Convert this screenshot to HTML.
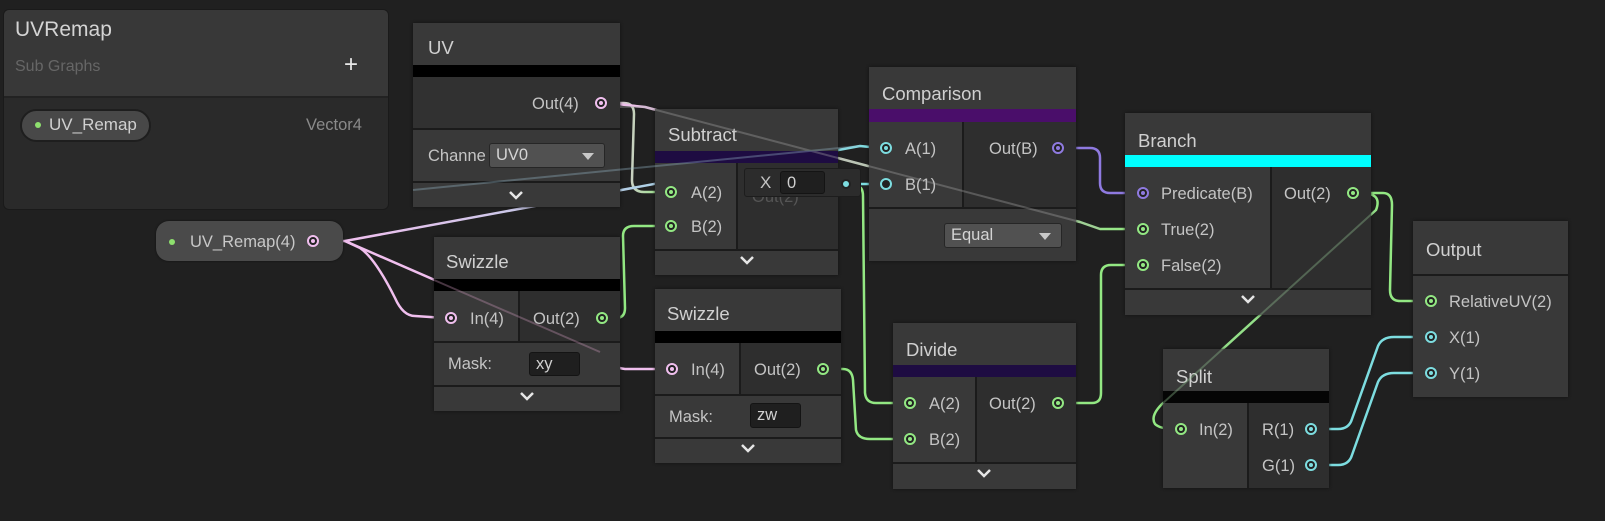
<!DOCTYPE html>
<html><head><meta charset="utf-8"><style>
*{margin:0;padding:0;box-sizing:border-box}
body{width:1605px;height:521px;background:#202020;position:relative;overflow:hidden;font-family:"Liberation Sans",sans-serif;color:#c4c4c4}
.a{position:absolute}
.hd{position:absolute;background:#393939}
.lt{position:absolute;background:#393939}
.dk{position:absolute;background:#2e2e2e}
.t{position:absolute;font-size:18.5px;color:#d0d0d0;white-space:nowrap}
.l{position:absolute;font-size:16.5px;color:#c4c4c4;white-space:nowrap;line-height:18px}
.sh{position:absolute;background:#1b1b1b;box-shadow:0 0 3px #111}
.dd{position:absolute;background:#515151;border:1px solid #262626;border-radius:3px;font-size:16.5px;color:#d4d4d4;padding-left:6px;line-height:23px}
.dd:after{content:"";position:absolute;right:10px;top:9px;border-left:6px solid transparent;border-right:6px solid transparent;border-top:7px solid #c8c8c8}
.box{position:absolute;background:#1f1f1f;border:1px solid #141414;border-radius:3px;font-size:16.5px;color:#d0d0d0;padding-left:6px;line-height:22px}
</style></head><body>

<svg class="a" style="left:0;top:0" width="1605" height="521">
<defs>
<linearGradient id="pg" x1="0" x2="1" y1="0" y2="0"><stop offset="0" stop-color="#f0bfee"/><stop offset="1" stop-color="#93e883"/></linearGradient>
<linearGradient id="pc" gradientUnits="userSpaceOnUse" x1="345" x2="880" y1="0" y2="0"><stop offset="0" stop-color="#f0bfee"/><stop offset="1" stop-color="#7ddde0"/></linearGradient>
<linearGradient id="pt" gradientUnits="userSpaceOnUse" x1="607" x2="1137" y1="0" y2="0"><stop offset="0" stop-color="#f0bfee"/><stop offset="1" stop-color="#93e883"/></linearGradient>
</defs>
<g fill="none" stroke-width="2.5" stroke-linejoin="round">
<path d="M607,103 L624,103 Q634,103 634,114 L632,180 Q632,192 644,192 L665,192" stroke="url(#pg)"/>
<path d="M607,103 L645,107 L1080,222 L1100,229 L1137,229" stroke="url(#pt)"/>
<path d="M322,241 L345,241 L860,146 L880,148" stroke="url(#pc)"/>
<path d="M345,241 L360,248 Q375,258 395,298 Q403,316 415,316 L445,318" stroke="#f0bfee"/>
<path d="M345,241 L600,352 Q612,368 625,369 L666,369" stroke="#f0bfee"/>
<path d="M608,318 L616,318 Q625,318 625,308 L623,236 Q623,226 634,226 L665,226" stroke="#93e883"/>
<path d="M850,184 L880,184" stroke="#7ddde0"/>
<path d="M850,186 L856,186 Q863,186 863,196 L865,393 Q866,403 876,403 L904,403" stroke="#93e883"/>
<path d="M829,369 L843,369 Q852,369 853,380 L856,430 Q858,439 870,439 L904,439" stroke="#93e883"/>
<path d="M1064,148 L1090,148 Q1100,148 1100,158 L1100,183 Q1100,193 1110,193 L1137,193" stroke="#8f7ae0"/>
<path d="M1064,403 L1092,403 Q1101,403 1101,393 L1101,275 Q1101,265 1111,265 L1137,265" stroke="#93e883"/>
<path d="M1359,193 L1383,193 Q1392,193 1392,205 L1390,290 Q1390,301 1400,301 L1425,301" stroke="#93e883"/>
<path d="M1359,193 Q1383,192 1376,210 L1162,404 Q1150,416 1155,424 Q1160,429 1175,429" stroke="#93e883"/>
<path d="M1317,429 L1338,429 Q1349,429 1352,419 L1378,346 Q1382,337 1394,337 L1425,337" stroke="#7ddde0"/>
<path d="M1317,465 L1338,465 Q1349,465 1352,455 L1378,382 Q1382,373 1394,373 L1425,373" stroke="#7ddde0"/>
</g></svg>

<div class="a" style="left:3px;top:9px;width:386px;height:201px;background:#2a2a2a;border:1px solid #1a1a1a;border-radius:6px;overflow:hidden">
 <div class="a" style="left:0;top:0;width:386px;height:88px;background:#383838;border-bottom:2px solid #222"></div>
</div>
<div class="t" style="left:15px;top:18px;font-size:21px;color:#d4d4d4">UVRemap</div>
<div class="l" style="left:15px;top:58px;font-size:16px;color:#666">Sub Graphs</div>
<div class="t" style="left:344px;top:51px;font-size:24px;color:#e8e8e8">+</div>
<div class="a" style="left:20px;top:109px;width:131px;height:33px;background:#484848;border:2px solid #1e1e1e;border-radius:17px"></div>
<div class="a" style="left:35px;top:122px;width:6px;height:6px;border-radius:3px;background:#8ee06e"></div>
<div class="l" style="left:49px;top:116px;font-size:17px;color:#d0d0d0">UV_Remap</div>
<div class="l" style="left:306px;top:116px;color:#8a8a8a">Vector4</div>

<div class="a" style="left:156px;top:221px;width:187px;height:40px;background:#4a4a4a;border-radius:13px;box-shadow:0 0 2px #111"></div>
<div class="a" style="left:169px;top:239px;width:6px;height:6px;border-radius:3px;background:#8ee06e"></div>
<div class="l" style="left:190px;top:233px;color:#c8c8c8">UV_Remap(4)</div>

<div class="sh" style="left:413px;top:23px;width:207px;height:184px"></div>
<div class="hd" style="left:413px;top:23px;width:207px;height:42px"></div>
<div class="a" style="left:413px;top:65px;width:207px;height:12px;background:#000"></div>
<div class="dk" style="left:413px;top:77px;width:207px;height:51px;background:#313131"></div>
<div class="lt" style="left:413px;top:130px;width:207px;height:51px"></div>
<div class="lt" style="left:413px;top:183px;width:207px;height:24px"></div>
<div class="t" style="left:428px;top:37px">UV</div>
<div class="l" style="left:532px;top:95px">Out(4)</div>
<div class="l" style="left:428px;top:147px">Channe</div>
<div class="dd" style="left:489px;top:143px;width:116px;height:25px">UV0</div>

<div class="sh" style="left:655px;top:109px;width:183px;height:166px"></div>
<div class="hd" style="left:655px;top:109px;width:183px;height:42px"></div>
<div class="a" style="left:655px;top:151px;width:183px;height:12px;background:#1e0c42"></div>
<div class="lt" style="left:655px;top:163px;width:81px;height:86px"></div>
<div class="dk" style="left:738px;top:163px;width:100px;height:86px"></div>
<div class="lt" style="left:655px;top:251px;width:183px;height:24px"></div>
<div class="t" style="left:668px;top:124px">Subtract</div>
<div class="l" style="left:691px;top:184px">A(2)</div>
<div class="l" style="left:691px;top:218px">B(2)</div>
<div class="l" style="left:752px;top:188px;color:#555">Out(2)</div>
<div class="a" style="left:744px;top:168px;width:117px;height:29px;background:#2c2c2c;border:1px solid #1d1d1d;border-radius:3px"></div>
<div class="l" style="left:760px;top:174px;font-size:17px">X</div>
<div class="box" style="left:780px;top:171px;width:45px;height:23px">0</div>

<div class="sh" style="left:869px;top:67px;width:207px;height:194px"></div>
<div class="hd" style="left:869px;top:67px;width:207px;height:42px"></div>
<div class="a" style="left:869px;top:109px;width:207px;height:13px;background:#4a0e6a"></div>
<div class="lt" style="left:869px;top:122px;width:93px;height:85px"></div>
<div class="dk" style="left:964px;top:122px;width:112px;height:85px"></div>
<div class="lt" style="left:869px;top:209px;width:207px;height:52px"></div>
<div class="t" style="left:882px;top:83px">Comparison</div>
<div class="l" style="left:905px;top:140px">A(1)</div>
<div class="l" style="left:905px;top:176px">B(1)</div>
<div class="l" style="left:989px;top:140px">Out(B)</div>
<div class="dd" style="left:944px;top:223px;width:118px;height:25px">Equal</div>

<div class="sh" style="left:434px;top:237px;width:186px;height:174px"></div>
<div class="hd" style="left:434px;top:237px;width:186px;height:42px"></div>
<div class="a" style="left:434px;top:279px;width:186px;height:12px;background:#000"></div>
<div class="lt" style="left:434px;top:291px;width:84px;height:50px"></div>
<div class="dk" style="left:520px;top:291px;width:100px;height:50px"></div>
<div class="lt" style="left:434px;top:343px;width:186px;height:42px"></div>
<div class="lt" style="left:434px;top:387px;width:186px;height:24px"></div>
<div class="t" style="left:446px;top:251px">Swizzle</div>
<div class="l" style="left:470px;top:310px">In(4)</div>
<div class="l" style="left:533px;top:310px">Out(2)</div>
<div class="l" style="left:448px;top:355px">Mask:</div>
<div class="box" style="left:529px;top:352px;width:51px;height:24px">xy</div>

<div class="sh" style="left:655px;top:289px;width:186px;height:174px"></div>
<div class="hd" style="left:655px;top:289px;width:186px;height:42px"></div>
<div class="a" style="left:655px;top:331px;width:186px;height:12px;background:#000"></div>
<div class="lt" style="left:655px;top:343px;width:84px;height:51px"></div>
<div class="dk" style="left:741px;top:343px;width:100px;height:51px"></div>
<div class="lt" style="left:655px;top:396px;width:186px;height:41px"></div>
<div class="lt" style="left:655px;top:439px;width:186px;height:24px"></div>
<div class="t" style="left:667px;top:303px">Swizzle</div>
<div class="l" style="left:691px;top:361px">In(4)</div>
<div class="l" style="left:754px;top:361px">Out(2)</div>
<div class="l" style="left:669px;top:408px">Mask:</div>
<div class="box" style="left:750px;top:403px;width:51px;height:25px">zw</div>

<div class="sh" style="left:893px;top:323px;width:183px;height:166px"></div>
<div class="hd" style="left:893px;top:323px;width:183px;height:42px"></div>
<div class="a" style="left:893px;top:365px;width:183px;height:12px;background:#1e0c42"></div>
<div class="lt" style="left:893px;top:377px;width:82px;height:85px"></div>
<div class="dk" style="left:977px;top:377px;width:99px;height:85px"></div>
<div class="lt" style="left:893px;top:464px;width:183px;height:25px"></div>
<div class="t" style="left:906px;top:339px">Divide</div>
<div class="l" style="left:929px;top:395px">A(2)</div>
<div class="l" style="left:929px;top:431px">B(2)</div>
<div class="l" style="left:989px;top:395px">Out(2)</div>

<div class="sh" style="left:1125px;top:113px;width:246px;height:202px"></div>
<div class="hd" style="left:1125px;top:113px;width:246px;height:42px"></div>
<div class="a" style="left:1125px;top:155px;width:246px;height:12px;background:#00ffff"></div>
<div class="lt" style="left:1125px;top:167px;width:145px;height:121px"></div>
<div class="dk" style="left:1272px;top:167px;width:99px;height:121px"></div>
<div class="lt" style="left:1125px;top:290px;width:246px;height:25px"></div>
<div class="t" style="left:1138px;top:130px">Branch</div>
<div class="l" style="left:1161px;top:185px">Predicate(B)</div>
<div class="l" style="left:1161px;top:221px">True(2)</div>
<div class="l" style="left:1161px;top:257px">False(2)</div>
<div class="l" style="left:1284px;top:185px">Out(2)</div>

<div class="sh" style="left:1413px;top:221px;width:155px;height:176px"></div>
<div class="hd" style="left:1413px;top:221px;width:155px;height:53px"></div>
<div class="lt" style="left:1413px;top:276px;width:155px;height:121px"></div>
<div class="t" style="left:1426px;top:239px">Output</div>
<div class="l" style="left:1449px;top:293px">RelativeUV(2)</div>
<div class="l" style="left:1449px;top:329px">X(1)</div>
<div class="l" style="left:1449px;top:365px">Y(1)</div>

<div class="sh" style="left:1163px;top:349px;width:166px;height:139px"></div>
<div class="hd" style="left:1163px;top:349px;width:166px;height:42px"></div>
<div class="a" style="left:1163px;top:391px;width:166px;height:12px;background:#050505"></div>
<div class="lt" style="left:1163px;top:403px;width:84px;height:85px"></div>
<div class="dk" style="left:1249px;top:403px;width:80px;height:85px"></div>
<div class="t" style="left:1176px;top:366px">Split</div>
<div class="l" style="left:1199px;top:421px">In(2)</div>
<div class="l" style="left:1262px;top:421px">R(1)</div>
<div class="l" style="left:1262px;top:457px">G(1)</div>

<svg class="a" style="left:0;top:0" width="1605" height="521">
<g fill="none" stroke-width="2" opacity="0.35">
<path d="M620,107 L645,107 L1080,222 L1100,229" stroke="#aaa"/>
<path d="M413,190 L860,146" stroke="#9bc"/>
<path d="M434,280 L600,352" stroke="#c9b"/>
<path d="M1376,210 L1162,404" stroke="#9c9"/>
</g>
<g stroke-width="2">
<g fill="#222"><circle cx="601" cy="103" r="5" stroke="#f0bfee"/><circle cx="313" cy="241" r="5" stroke="#f0bfee"/><circle cx="451" cy="318" r="5" stroke="#f0bfee"/><circle cx="672" cy="369" r="5" stroke="#f0bfee"/></g>
<g fill="#f0bfee"><circle cx="601" cy="103" r="2"/><circle cx="313" cy="241" r="2"/><circle cx="451" cy="318" r="2"/><circle cx="672" cy="369" r="2"/></g>
<g fill="#222" stroke="#93e883"><circle cx="671" cy="192" r="5"/><circle cx="671" cy="226" r="5"/><circle cx="602" cy="318" r="5"/><circle cx="823" cy="369" r="5"/><circle cx="910" cy="403" r="5"/><circle cx="910" cy="439" r="5"/><circle cx="1058" cy="403" r="5"/><circle cx="1143" cy="229" r="5"/><circle cx="1143" cy="265" r="5"/><circle cx="1353" cy="193" r="5"/><circle cx="1431" cy="301" r="5"/><circle cx="1181" cy="429" r="5"/></g>
<g fill="#93e883"><circle cx="671" cy="192" r="2"/><circle cx="671" cy="226" r="2"/><circle cx="602" cy="318" r="2"/><circle cx="823" cy="369" r="2"/><circle cx="910" cy="403" r="2"/><circle cx="910" cy="439" r="2"/><circle cx="1058" cy="403" r="2"/><circle cx="1143" cy="229" r="2"/><circle cx="1143" cy="265" r="2"/><circle cx="1353" cy="193" r="2"/><circle cx="1431" cy="301" r="2"/><circle cx="1181" cy="429" r="2"/></g>
<g fill="#222" stroke="#7ddde0"><circle cx="886" cy="148" r="5"/><circle cx="886" cy="184" r="5"/><circle cx="1431" cy="337" r="5"/><circle cx="1431" cy="373" r="5"/><circle cx="1311" cy="429" r="5"/><circle cx="1311" cy="465" r="5"/></g>
<g fill="#7ddde0"><circle cx="886" cy="148" r="2"/><circle cx="1431" cy="337" r="2"/><circle cx="1431" cy="373" r="2"/><circle cx="1311" cy="429" r="2"/><circle cx="1311" cy="465" r="2"/><circle cx="846" cy="184" r="4" stroke="#222"/></g>
<g fill="#222" stroke="#8f7ae0"><circle cx="1058" cy="148" r="5"/><circle cx="1143" cy="193" r="5"/></g>
<g fill="#8f7ae0"><circle cx="1058" cy="148" r="2"/><circle cx="1143" cy="193" r="2"/></g>
</g>
<g fill="none" stroke="#e6e6e6" stroke-width="2.5">
<path d="M510,192 L516,198 L522,192"/>
<path d="M741,257 L747,263 L753,257"/>
<path d="M521,393 L527,399 L533,393"/>
<path d="M742,445 L748,451 L754,445"/>
<path d="M978,470 L984,476 L990,470"/>
<path d="M1242,296 L1248,302 L1254,296"/>
</g>
</svg>
</body></html>
